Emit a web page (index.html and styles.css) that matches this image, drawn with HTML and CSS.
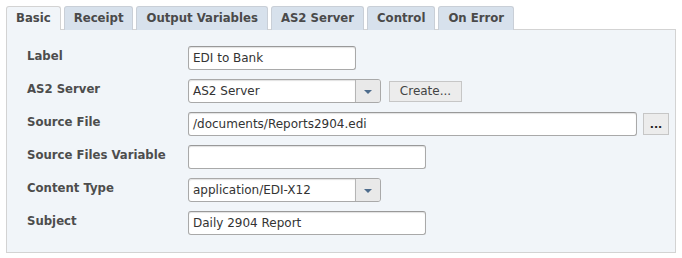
FILE: index.html
```html
<!DOCTYPE html>
<html>
<head>
<meta charset="utf-8">
<link rel="stylesheet" href="styles.css">
</head>
<body>
<div class="wrap">
  <div class="tabs">
    <div class="tab active">Basic</div>
    <div class="tab">Receipt</div>
    <div class="tab">Output Variables</div>
    <div class="tab">AS2 Server</div>
    <div class="tab">Control</div>
    <div class="tab">On Error</div>
  </div>
  <div class="panel">
    <div class="row">
      <div class="label">Label</div>
      <div class="field"><div class="input w168">EDI to Bank</div></div>
    </div>
    <div class="row">
      <div class="label">AS2 Server</div>
      <div class="field">
        <div class="select"><div class="sel-text">AS2 Server</div><div class="sel-arrow"><span class="tri"></span></div></div>
        <div class="btn create">Create...</div>
      </div>
    </div>
    <div class="row">
      <div class="label">Source File</div>
      <div class="field"><div class="input wfile">/documents/Reports2904.edi</div><div class="btn dots">...</div></div>
    </div>
    <div class="row">
      <div class="label">Source Files Variable</div>
      <div class="field"><div class="input w238"></div></div>
    </div>
    <div class="row">
      <div class="label">Content Type</div>
      <div class="field">
        <div class="select"><div class="sel-text">application/EDI-X12</div><div class="sel-arrow"><span class="tri"></span></div></div>
      </div>
    </div>
    <div class="row">
      <div class="label">Subject</div>
      <div class="field"><div class="input w238">Daily 2904 Report</div></div>
    </div>
  </div>
</div>
</body>
</html>
```
FILE: styles.css
```css
html, body {
  margin: 0;
  padding: 0;
  background: #ffffff;
}
body {
  font-family: "DejaVu Sans Condensed", "DejaVu Sans", sans-serif;
  font-size: 13px;
  color: #333;
}
.wrap {
  padding: 6px 6px 0 6px;
  width: 670px;
}
.tabs {
  display: flex;
  gap: 3px;
  height: 23px;
  position: relative;
  z-index: 1;
}
.tab {
  box-sizing: border-box;
  height: 24px;
  padding: 0 9px;
  border: 1px solid #c9cfd7;
  border-bottom: none;
  border-radius: 3px 3px 0 0;
  background: #d7e1ec;
  color: #4a4a4a;
  font-weight: bold;
  font-size: 13px;
  line-height: 22px;
}
.tab.active {
  background: #f1f5f9;
  border-color: #d3d3d3;
  height: 24px;
}
.panel {
  box-sizing: border-box;
  height: 224px;
  border: 1px solid #d3d3d3;
  background: #f1f5f9;
  padding: 16px 0 0 20px;
  display: flex;
  flex-direction: column;
  gap: 9px;
}
.row {
  display: flex;
  align-items: flex-start;
  height: 24px;
}
.label {
  width: 161px;
  font-weight: bold;
  color: #4d4d4d;
  font-size: 13px;
  line-height: 18px;
  margin-top: 1px;
}
.field {
  display: flex;
  align-items: center;
  height: 24px;
}
.input {
  box-sizing: border-box;
  height: 24px;
  border: 1px solid #a9a9a9;
  border-top-color: #999;
  border-radius: 3px;
  background: #fff;
  padding: 0 4px;
  line-height: 22px;
  color: #333;
  font-family: "DejaVu Sans", sans-serif;
  font-size: 12px;
  box-shadow: inset 0 1px 1px rgba(0,0,0,0.12);
}
.w168 { width: 168px; }
.w238 { width: 238px; }
.wfile { width: 449px; }
.select {
  box-sizing: border-box;
  display: flex;
  width: 193px;
  height: 24px;
  border: 1px solid #a9a9a9;
  border-radius: 3px;
  background: #e9e9e9;
  overflow: hidden;
}
.sel-text {
  flex: 1;
  background: #fff;
  border-right: 1px solid #b5b5b5;
  padding: 0 4px;
  line-height: 22px;
  font-family: "DejaVu Sans", sans-serif;
  font-size: 12px;
  border-radius: 3px 0 0 3px;
  box-shadow: inset 0 1px 1px rgba(0,0,0,0.12);
}
.sel-arrow {
  width: 24px;
  display: flex;
  align-items: center;
  justify-content: center;
  background: #e9e9e9;
}
.tri {
  width: 0;
  height: 0;
  border-left: 4px solid transparent;
  border-right: 4px solid transparent;
  border-top: 4px solid #4e6c8c;
  margin-top: 1px;
}
.btn {
  box-sizing: border-box;
  border: 1px solid #c6c6c6;
  background: #ececec;
  color: #444;
  font-family: "DejaVu Sans", sans-serif;
  font-size: 12px;
  text-align: center;
}
.create {
  width: 73px;
  height: 21px;
  line-height: 19px;
  margin-left: 8px;
}
.dots {
  width: 26px;
  height: 22px;
  line-height: 22px;
  margin-left: 6px;
  font-weight: bold;
  color: #222;
  font-size: 11px;
}
```
